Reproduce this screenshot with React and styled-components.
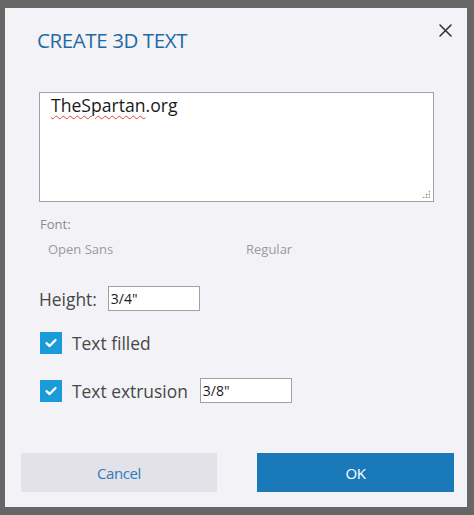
import React from 'react';
import styled, { createGlobalStyle } from 'styled-components';

const GlobalStyle = createGlobalStyle`
  html, body {
    margin: 0;
    padding: 0;
    background: #666666; /* dark frame round the dialog */
  }
  body {
    font-family: "Open Sans", "Liberation Sans", sans-serif;
  }
`;

const Frame = styled.div`
  width: 474px;
  height: 515px;
  padding: 8px 7px 8px 5px;
  box-sizing: border-box;
`;

const Dialog = styled.div`
  height: 100%;
  background: #f3f3f7;
  display: flex;
  flex-direction: column;
`;

const Header = styled.div`
  display: flex;
  justify-content: space-between;
  align-items: flex-start;
  padding: 19px 14px 0 32px;
`;

const Title = styled.h2`
  margin: 0;
  font-size: 20.5px;
  font-weight: 400;
  line-height: 27px;
  color: #1f6aa6;
  letter-spacing: -0.4px;
`;

const CloseButton = styled.button`
  border: none;
  background: none;
  padding: 0;
  margin-top: -4px;
  width: 15px;
  height: 15px;
  display: flex;
  cursor: pointer;
`;

const Body = styled.div`
  padding: 0 0 0 34px;
  display: flex;
  flex-direction: column;
`;

const TextBox = styled.div`
  margin-top: 38px;
  width: 395px;
  height: 110px;
  box-sizing: border-box;
  border: 1px solid #a0a0a0;
  background: #ffffff;
  position: relative;
  padding: 0 0 0 11px;
  font-size: 17.6px;
  line-height: 24px;
  color: #1a1a1a;
`;

const Misspelled = styled.span`
  text-decoration: underline wavy #e0403a;
  text-decoration-thickness: 1px;
  text-underline-offset: 3px;
`;

const Grip = styled.span`
  position: absolute;
  right: 3px;
  bottom: 3px;
  width: 8px;
  height: 8px;
  background:
    radial-gradient(circle, #9a9a9a 0.9px, transparent 1.1px) 0 0 / 3px 3px;
  clip-path: polygon(100% 0, 100% 100%, 0 100%);
`;

const FontLabel = styled.div`
  margin-top: 13px;
  padding-left: 1px;
  font-size: 13px;
  line-height: 18px;
  color: #8a8a8a;
`;

const FontValues = styled.div`
  margin-top: 7px;
  padding-left: 9px;
  display: grid;
  grid-template-columns: 198px auto;
  font-size: 13px;
  line-height: 18px;
  color: #9a9a9a;
`;

const Row = styled.div`
  display: flex;
  align-items: center;
  margin-top: ${(p) => p.$gap}px;
  height: ${(p) => p.$height}px;
`;

const Label = styled.span`
  font-size: 17.4px;
  color: #474747;
  margin-right: ${(p) => p.$space || 0}px;
`;

const Field = styled.div`
  width: 92px;
  height: 25px;
  box-sizing: border-box;
  border: 1px solid #a0a0a0;
  background: #ffffff;
  font-size: 14px;
  line-height: 23px;
  padding-left: 2px;
  color: #1a1a1a;
`;

const Check = styled.span`
  width: 22px;
  height: 22px;
  background: #1b9ad8;
  display: flex;
  align-items: center;
  justify-content: center;
  margin-left: 1px;
  margin-right: 10px;
  flex-shrink: 0;
`;

const Buttons = styled.div`
  margin-top: 50px;
  padding: 0 13px 0 16px;
  display: flex;
  gap: 40px;
`;

const Button = styled.button`
  width: ${(p) => p.$width}px;
  height: 39px;
  border: none;
  font-family: "Open Sans", "Liberation Sans", sans-serif;
  font-size: 15px;
  letter-spacing: -0.4px;
  background: ${(p) => (p.$primary ? '#1a7ab9' : '#e2e2e8')};
  color: ${(p) => (p.$primary ? '#ffffff' : '#2f7cbd')};
  cursor: pointer;
`;

const Tick = () => (
  <svg width="14" height="12" viewBox="0 0 14 12">
    <path d="M2.5 6.2 L5.6 9 L11.5 3" fill="none" stroke="#fff" strokeWidth="2.4" strokeLinecap="round" strokeLinejoin="round" />
  </svg>
);

const App = () => {
  return (
    <Frame>
      <GlobalStyle />
      <Dialog>
        <Header>
          <Title>CREATE 3D TEXT</Title>
          <CloseButton aria-label="Close">
            <svg width="15" height="15" viewBox="0 0 15 15">
              <path d="M2 2 L13 13 M13 2 L2 13" stroke="#333" strokeWidth="1.6" strokeLinecap="round" />
            </svg>
          </CloseButton>
        </Header>
        <Body>
          <TextBox>
            <Misspelled>TheSpartan</Misspelled>.org
            <Grip />
          </TextBox>
          <FontLabel>Font:</FontLabel>
          <FontValues>
            <span>Open Sans</span>
            <span>Regular</span>
          </FontValues>
          <Row $gap={28} $height={25}>
            <Label $space={11}>Height:</Label>
            <Field>3/4"</Field>
          </Row>
          <Row $gap={20} $height={24}>
            <Check><Tick /></Check>
            <Label>Text filled</Label>
          </Row>
          <Row $gap={23} $height={25}>
            <Check><Tick /></Check>
            <Label $space={12}>Text extrusion</Label>
            <Field>3/8"</Field>
          </Row>
        </Body>
        <Buttons>
          <Button $width={196}>Cancel</Button>
          <Button $width={197} $primary>OK</Button>
        </Buttons>
      </Dialog>
    </Frame>
  );
};

export default App;
